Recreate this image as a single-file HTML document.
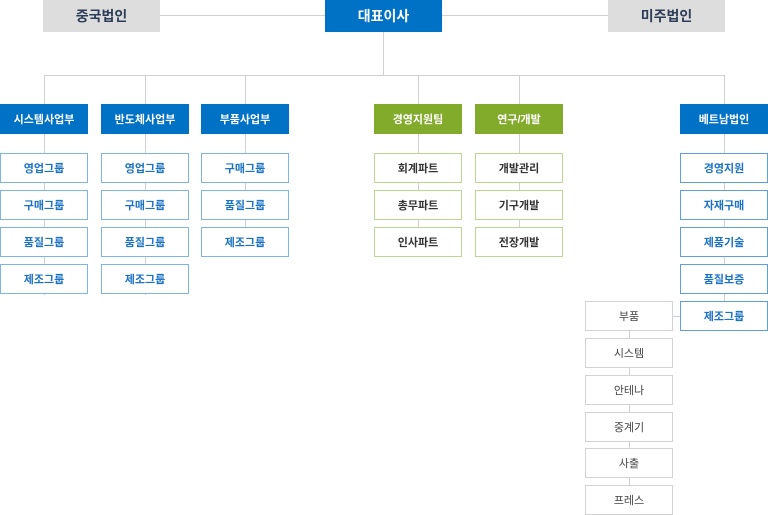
<!DOCTYPE html>
<html><head><meta charset="utf-8"><style>
*{margin:0;padding:0;box-sizing:border-box}
body{width:768px;height:515px;position:relative;background:#fff;font-family:"Liberation Sans","Noto Sans CJK KR",sans-serif;overflow:hidden}
.b{position:absolute;display:flex;align-items:center;justify-content:center;font-size:11px;font-weight:bold;white-space:nowrap}
.l{position:absolute;background:#d0d0d0}
.top{height:32px;width:117px;top:0;font-size:14px}
.g{background:#ddd;color:#2e3d57}
.bl{background:#0072c6;color:#fff}
.gr{background:#83ab2b;color:#fff}
.h{top:104px;height:30px;width:88px}
.s{height:30px;width:88px;background:#fff}
.sb{border:1.5px solid #7eb5e6;color:#1a72c4}
.sg{border:1.5px solid #bcd88f;color:#333}
.sv{border:1.5px solid #5ea0dd;color:#1a72c4}
.sx{border:1.5px solid #d2d2d2;color:#444;font-weight:normal}
</style></head><body>
<!-- lines -->
<div class="l" style="left:160px;top:15px;width:448px;height:1px"></div>
<div class="l" style="left:383px;top:32px;width:1px;height:44px"></div>
<div class="l" style="left:44px;top:75px;width:681px;height:1px"></div>
<div class="l" style="left:44px;top:75px;width:1px;height:220px"></div>
<div class="l" style="left:145px;top:75px;width:1px;height:220px"></div>
<div class="l" style="left:245px;top:75px;width:1px;height:182px"></div>
<div class="l" style="left:418px;top:75px;width:1px;height:182px"></div>
<div class="l" style="left:519px;top:75px;width:1px;height:182px"></div>
<div class="l" style="left:724px;top:75px;width:1px;height:256px"></div>
<div class="l" style="left:629px;top:316px;width:1px;height:190px"></div>
<div class="l" style="left:673px;top:316px;width:8px;height:1px"></div>

<div class="b top g" style="left:43px">중국법인</div>
<div class="b top bl" style="left:325px">대표이사</div>
<div class="b top g" style="left:608px">미주법인</div>

<div class="b h bl" style="left:0">시스템사업부</div>
<div class="b h bl" style="left:101px">반도체사업부</div>
<div class="b h bl" style="left:201px">부품사업부</div>
<div class="b h gr" style="left:374px">경영지원팀</div>
<div class="b h gr" style="left:475px">연구/개발</div>
<div class="b h bl" style="left:680px">베트남법인</div>

<div class="b s sb" style="left:0;top:153px">영업그룹</div>
<div class="b s sb" style="left:0;top:190px">구매그룹</div>
<div class="b s sb" style="left:0;top:227px">품질그룹</div>
<div class="b s sb" style="left:0;top:264px">제조그룹</div>
<div class="b s sb" style="left:101px;top:153px">영업그룹</div>
<div class="b s sb" style="left:101px;top:190px">구매그룹</div>
<div class="b s sb" style="left:101px;top:227px">품질그룹</div>
<div class="b s sb" style="left:101px;top:264px">제조그룹</div>
<div class="b s sb" style="left:201px;top:153px">구매그룹</div>
<div class="b s sb" style="left:201px;top:190px">품질그룹</div>
<div class="b s sb" style="left:201px;top:227px">제조그룹</div>

<div class="b s sg" style="left:374px;top:153px">회계파트</div>
<div class="b s sg" style="left:374px;top:190px">총무파트</div>
<div class="b s sg" style="left:374px;top:227px">인사파트</div>
<div class="b s sg" style="left:475px;top:153px">개발관리</div>
<div class="b s sg" style="left:475px;top:190px">기구개발</div>
<div class="b s sg" style="left:475px;top:227px">전장개발</div>

<div class="b s sv" style="left:680px;top:153px">경영지원</div>
<div class="b s sv" style="left:680px;top:190px">자재구매</div>
<div class="b s sv" style="left:680px;top:227px">제품기술</div>
<div class="b s sv" style="left:680px;top:264px">품질보증</div>
<div class="b s sv" style="left:680px;top:301px">제조그룹</div>

<div class="b s sx" style="left:585px;top:301px">부품</div>
<div class="b s sx" style="left:585px;top:338px">시스템</div>
<div class="b s sx" style="left:585px;top:375px">안테나</div>
<div class="b s sx" style="left:585px;top:412px">중계기</div>
<div class="b s sx" style="left:585px;top:448px">사출</div>
<div class="b s sx" style="left:585px;top:485px">프레스</div>
</body></html>
